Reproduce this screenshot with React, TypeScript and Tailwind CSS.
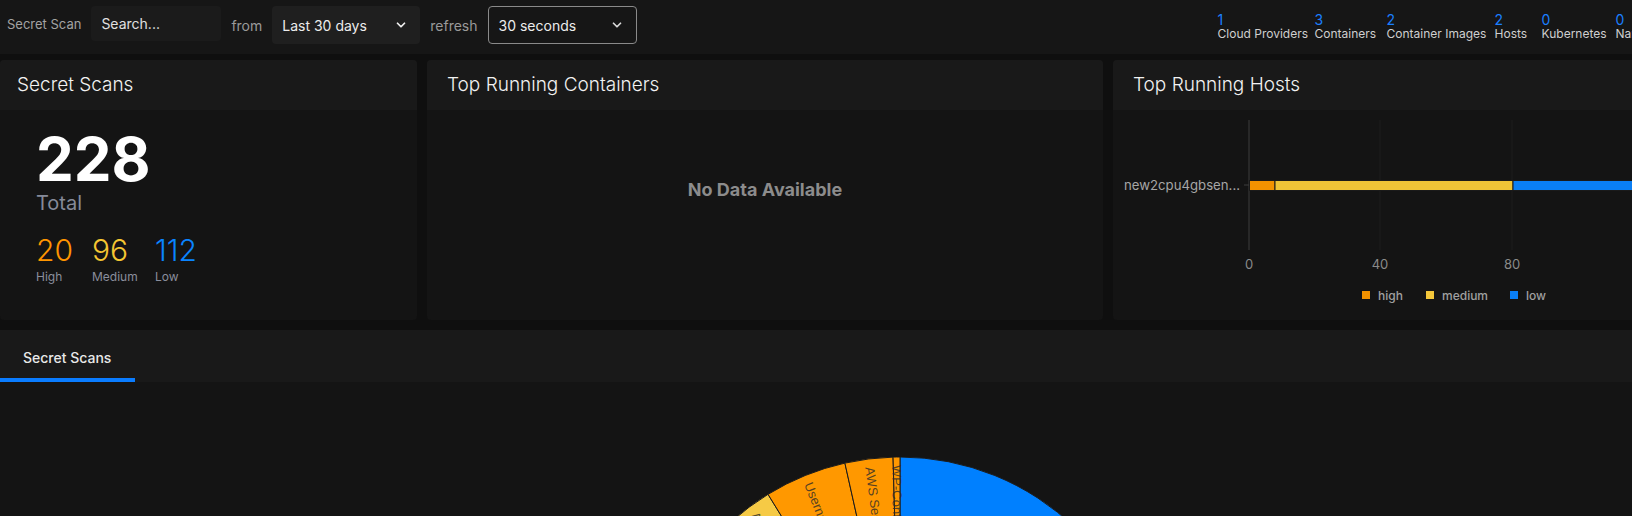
import React from "react";
import { ChevronDown } from "lucide-react";

const CX = 252;
const CY = 252;
const R = 252;

function pt(a: number, r: number) {
  const rad = (a * Math.PI) / 180;
  return [CX + r * Math.sin(rad), CY - r * Math.cos(rad)];
}

function slicePath(a0: number, a1: number) {
  const [x0, y0] = pt(a0, R);
  const [x1, y1] = pt(a1, R);
  const large = a1 - a0 > 180 ? 1 : 0;
  return `M ${CX} ${CY} L ${x0} ${y0} A ${R} ${R} 0 ${large} 1 ${x1} ${y1} Z`;
}

const slices = [
  { a0: 0, a1: 176.84, color: "#0080ff", label: "" },
  { a0: 176.84, a1: 240, color: "#f6ca45", label: "Generic Secret" },
  { a0: 240, a1: 290, color: "#f6ca45", label: "Password in URL" },
  { a0: 290, a1: 318, color: "#f6ca45", label: "Private Key" },
  { a0: 318, a1: 328.42, color: "#f6ca45", label: "AWS API Key" },
  { a0: 328.42, a1: 347.37, color: "#ff9800", label: "Username and Password in URI" },
  { a0: 347.37, a1: 358.42, color: "#ff9800", label: "AWS Session Token" },
  { a0: 358.42, a1: 360, color: "#ff9800", label: "WP-Config" },
];

function Pie() {
  return (
    <svg width={504} height={504} viewBox="0 0 504 504">
      {slices.map((s, i) => (
        <path key={i} d={slicePath(s.a0, s.a1)} fill={s.color} stroke="#1c1c1c" strokeWidth={1} />
      ))}
      {slices.map((s, i) => {
        if (!s.label) return null;
        const mid = (s.a0 + s.a1) / 2;
        const [x, y] = pt(mid, 244);
        return (
          <text
            key={"l" + i}
            x={x}
            y={y}
            fontSize={13}
            fontFamily="'Liberation Sans', Arial, sans-serif"
            fill="#2a2a2a"
            fillOpacity={0.8}
            dominantBaseline="central"
            transform={`rotate(${mid + 90} ${x} ${y})`}
          >
            {s.label}
          </text>
        );
      })}
    </svg>
  );
}

function HostsChart() {
  const grid = [267, 399, 530, 661];
  const ticks = [
    { x: 136, t: "0" },
    { x: 267, t: "40" },
    { x: 399, t: "80" },
    { x: 530, t: "120" },
    { x: 661, t: "160" },
  ];
  const legend = [
    { sx: 249, tx: 265, c: "#f39200", t: "high" },
    { sx: 313, tx: 329, c: "#f3c63a", t: "medium" },
    { sx: 397, tx: 413, c: "#0a7ff5", t: "low" },
  ];
  return (
    <svg width={676} height={210} viewBox="0 0 676 210" fontFamily="Inter, 'Noto Sans', sans-serif">
      {grid.map((g) => (
        <line key={g} x1={g} x2={g} y1={10} y2={140} stroke="#1d1d1d" strokeWidth={1} />
      ))}
      <line x1={136} x2={136} y1={10} y2={140} stroke="#3c3c3c" strokeWidth={1} />
      <line x1={131} x2={136} y1={75} y2={75} stroke="#3c3c3c" strokeWidth={1} />
      <text x={127} y={75} textAnchor="end" dominantBaseline="central" fontSize={13.2} fill="#a6a6a6">
        new2cpu4gbsen...
      </text>
      <rect x={136.5} y={70.5} width={25.5} height={10} fill="#f39200" stroke="#1a1a1a" strokeWidth={1} />
      <rect x={162} y={70.5} width={238} height={10} fill="#efc437" stroke="#1a1a1a" strokeWidth={1} />
      <rect x={400} y={70.5} width={300} height={10} fill="#0a7ff5" stroke="#1a1a1a" strokeWidth={1} />
      {ticks.map((t) => (
        <text key={t.t} x={t.x} y={154} textAnchor="middle" dominantBaseline="central" fontSize={13} fill="#8a8a8a">
          {t.t}
        </text>
      ))}
      {legend.map((l) => (
        <g key={l.t}>
          <rect x={l.sx} y={181} width={8} height={8} fill={l.c} />
          <text x={l.tx} y={185} dominantBaseline="central" fontSize={12} fontWeight={500} fill="#a0a0a0">
            {l.t}
          </text>
        </g>
      ))}
    </svg>
  );
}

const stats = [
  { n: "1", l: "Cloud Providers", w: "w-[97px]" },
  { n: "3", l: "Containers", w: "w-[72px]" },
  { n: "2", l: "Container Images", w: "w-[108px]" },
  { n: "2", l: "Hosts", w: "w-[47px]" },
  { n: "0", l: "Kubernetes", w: "w-[74px]" },
  { n: "0", l: "Namespaces", w: "w-[90px]" },
  { n: "0", l: "Pods", w: "w-[50px]" },
];

export default function App() {
  return (
    <div className="w-[1632px] h-[516px] overflow-hidden bg-[#0f0f0f] font-['Inter','Noto_Sans',sans-serif]">
      <div className="w-[1800px]">
        {/* Top bar */}
        <div className="h-[54px] flex items-start bg-[#161616]">
          <div className="mt-[6px] ml-[7px] flex items-start gap-[10px]">
            <div className="h-[38px] flex items-center text-[13px] text-[#a3a3a3]">Secret Scan</div>
            <div className="w-[130px] h-[35px] rounded-[4px] bg-[#1b1b1b] flex items-center pl-[10px] text-[14px] text-[#e0e0e0]">
              Search...
            </div>
            <div className="h-[38px] flex items-center text-[14px] text-[#9a9a9a]">from</div>
            <div className="w-[148px] h-[38px] rounded-[4px] bg-[#1f1f1f] flex items-center justify-between pl-[10px] pr-[12px] text-[14px] text-[#ececec]">
              <span>Last 30 days</span>
              <ChevronDown size={14} strokeWidth={3} color="#f0f0f0" />
            </div>
            <div className="h-[38px] flex items-center text-[14px] text-[#9a9a9a]">refresh</div>
            <div className="w-[149px] h-[38px] rounded-[4px] border border-[#8a8a8a] flex items-center justify-between pl-[10px] pr-[12px] text-[14px] text-[#ececec]">
              <span>30 seconds</span>
              <ChevronDown size={14} strokeWidth={3} color="#d8d8d8" />
            </div>
          </div>
          <div className="mt-[13px] ml-[581px] flex">
            {stats.map((s) => (
              <div key={s.l} className={`${s.w} flex flex-col`}>
                <span className="text-[14px] leading-[14px] text-[#1a7fff]">{s.n}</span>
                <span className="text-[12px] leading-[14px] text-[#cfcfcf] whitespace-nowrap">{s.l}</span>
              </div>
            ))}
          </div>
        </div>

        {/* Panels */}
        <div className="mt-[6px] flex gap-[10px] h-[260px]">
          <div className="w-[417px] rounded-[4px] overflow-hidden bg-[#141414] flex flex-col">
            <div className="h-[50px] bg-[#191919] flex items-center pl-[17px] text-[19px] font-light text-[#f2f2f2]">
              Secret Scans
            </div>
            <div className="pl-[36px] pt-[19px]">
              <div className="text-[60px] leading-[60px] font-bold text-white">228</div>
              <div className="text-[20px] leading-[28px] text-[#858a99]">Total</div>
              <div className="mt-[18px] flex">
                <div className="w-[56px] flex flex-col">
                  <span className="text-[30px] leading-[30px] font-light text-[#ff9500]">20</span>
                  <span className="mt-[4px] text-[12px] leading-[16px] text-[#8a8e9c]">High</span>
                </div>
                <div className="w-[63px] flex flex-col">
                  <span className="text-[30px] leading-[30px] font-light text-[#f5c632]">96</span>
                  <span className="mt-[4px] text-[12px] leading-[16px] text-[#8a8e9c]">Medium</span>
                </div>
                <div className="flex flex-col">
                  <span className="text-[30px] leading-[30px] font-light text-[#0a84ff]">112</span>
                  <span className="mt-[4px] text-[12px] leading-[16px] text-[#8a8e9c]">Low</span>
                </div>
              </div>
            </div>
          </div>

          <div className="w-[676px] rounded-[4px] overflow-hidden bg-[#141414] flex flex-col">
            <div className="h-[50px] bg-[#191919] flex items-center pl-[20px] text-[19px] font-light text-[#f2f2f2]">
              Top Running Containers
            </div>
            <div className="flex justify-center pt-[68px]">
              <span className="text-[18px] leading-[24px] font-bold text-[#8c8c8c]">No Data Available</span>
            </div>
          </div>

          <div className="w-[676px] rounded-[4px] overflow-hidden bg-[#141414] flex flex-col">
            <div className="h-[50px] bg-[#191919] flex items-center pl-[20px] text-[19px] font-light text-[#f2f2f2]">
              Top Running Hosts
            </div>
            <HostsChart />
          </div>
        </div>

        {/* Bottom tabs */}
        <div className="mt-[10px]">
          <div className="h-[52px] bg-[#191919] flex">
            <div className="w-[135px] h-[52px] border-b-4 border-[#0a7cff] flex items-center pl-[23px] pt-[6px] text-[14px] font-medium text-[#e8e8e8]">
              Secret Scans
            </div>
          </div>
          <div className="bg-[#141414] flex justify-center pt-[75px] pb-[40px]">
            <Pie />
          </div>
        </div>
      </div>
    </div>
  );
}
